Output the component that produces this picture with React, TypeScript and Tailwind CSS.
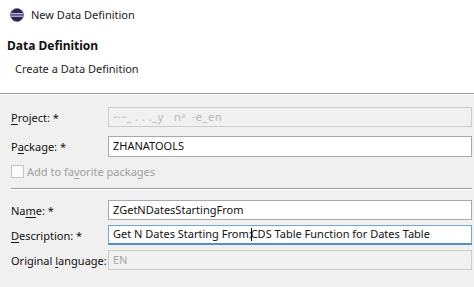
import React from 'react';

const EclipseIcon: React.FC = () => (
    <svg width="14" height="14" viewBox="0 0 14 14">
        <circle cx="7" cy="7" r="6.5" fill="#2c2255" />
        <rect x="0.5" y="5.2" width="13" height="1.1" fill="#e6e3f0" />
        <rect x="0.5" y="7.6" width="13" height="1.1" fill="#e6e3f0" />
        <circle cx="7" cy="7" r="6.5" fill="none" stroke="#5a4f86" strokeWidth="0.6" />
    </svg>
);

const Label: React.FC<{ children: React.ReactNode }> = ({ children }) => (
    <div className="w-[97px] shrink-0 text-[11px] text-[#111] leading-none whitespace-nowrap">{children}</div>
);

const U: React.FC<{ children: React.ReactNode }> = ({ children }) => (
    <span className="underline underline-offset-[2px] decoration-[1px]">{children}</span>
);

export default function App() {
    return (
        <div className="w-[474px] h-[287px] overflow-hidden bg-[#f0f0f0] font-['Noto_Sans','Liberation_Sans',sans-serif]">
            {/* title bar */}
            <div className="h-[30px] bg-white flex items-center pl-[10px] gap-[7px]">
                <EclipseIcon />
                <span className="text-[11px] text-[#1a1a1a]">New Data Definition</span>
            </div>

            {/* header */}
            <div className="h-[63px] bg-white pl-[7px] pt-[8px]">
                <div className="text-[12px] font-bold text-[#111] leading-[16px]">Data Definition</div>
                <div className="pl-[8px] pt-[7px] text-[11px] text-[#1e1e1e] leading-[16px]">Create a Data Definition</div>
            </div>
            <div className="border-t border-[#a0a0a0]" />
            <div className="border-t border-white" />

            {/* form */}
            <div className="pl-[11px] pr-[2px] pt-[12px]">
                <div className="flex items-center h-[20px]">
                    <Label>
                        <U>P</U>roject: *
                    </Label>
                    <div className="flex-1 h-[20px] border border-[#cccccc] bg-[#f0f0f0] flex items-center px-[4px] text-[11px] text-[#b8b8b8] tracking-[0.5px]">
                        ᵕ·ᵕ_ . . ._y&nbsp;&nbsp;&nbsp;nᵃ&nbsp;&nbsp;·e_en
                    </div>
                </div>

                <div className="flex items-center h-[21px] mt-[9px]">
                    <Label>
                        P<U>a</U>ckage: *
                    </Label>
                    <div className="flex-1 h-[21px] border border-[#a8a8a8] bg-white flex items-center px-[4px] text-[11px] text-[#111]">
                        ZHANATOOLS
                    </div>
                </div>

                <div className="flex items-center h-[14px] mt-[7px] gap-[3px]">
                    <div className="w-[13px] h-[13px] border border-[#c6c6c6] bg-[#fbfbfb]" />
                    <span className="text-[11px] text-[#a0a0a0] leading-none">
                        Add to fa<U>v</U>orite packages
                    </span>
                </div>

                <div className="mt-[10px] border-t border-[#a0a0a0]" />
                <div className="border-t border-white" />

                <div className="flex items-center h-[20px] mt-[10px]">
                    <Label>
                        Na<U>m</U>e: *
                    </Label>
                    <div className="flex-1 h-[20px] border border-[#a8a8a8] bg-white flex items-center px-[4px] text-[11px] text-[#111]">
                        ZGetNDatesStartingFrom
                    </div>
                </div>

                <div className="flex items-center h-[20px] mt-[5px]">
                    <Label>
                        <U>D</U>escription: *
                    </Label>
                    <div className="flex-1 h-[20px] border border-[#6fa6dc] border-b-2 border-b-[#4f8fd0] bg-white flex items-center px-[4px] text-[11px] text-[#111] whitespace-nowrap">
                        Get N Dates Starting From:<span className="inline-block w-px h-[13px] bg-black -mx-px" />CDS Table Function for Dates Table
                    </div>
                </div>

                <div className="flex items-center h-[20px] mt-[5px]">
                    <Label>
                        Original <U>l</U>anguage:
                    </Label>
                    <div className="flex-1 h-[20px] border border-[#cccccc] bg-[#f0f0f0] flex items-center px-[4px] text-[11px] text-[#a8a8a8]">
                        EN
                    </div>
                </div>
            </div>
        </div>
    );
}
